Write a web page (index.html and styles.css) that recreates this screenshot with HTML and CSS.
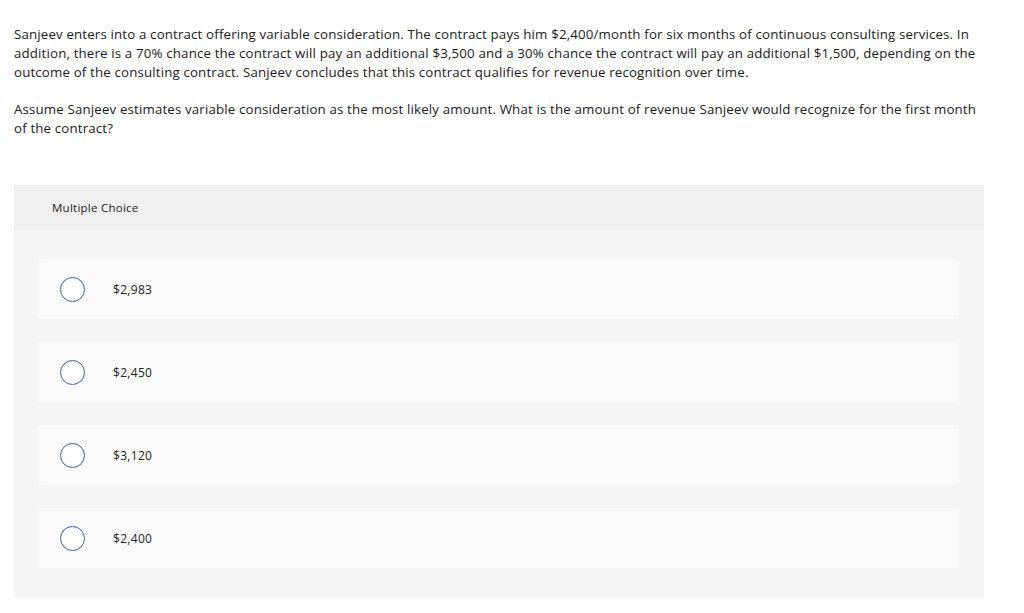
FILE: index.html
```html
<!DOCTYPE html>
<html>
<head>
<meta charset="utf-8">
<link rel="stylesheet" href="styles.css">
</head>
<body>
<div class="page">
  <div class="question">
    <p>Sanjeev enters into a contract offering variable consideration. The contract pays him $2,400/month for six months of continuous consulting services. In addition, there is a 70% chance the contract will pay an additional $3,500 and a 30% chance the contract will pay an additional $1,500, depending on the outcome of the consulting contract. Sanjeev concludes that this contract qualifies for revenue recognition over time.</p>
    <p>Assume Sanjeev estimates variable consideration as the most likely amount. What is the amount of revenue Sanjeev would recognize for the first month of the contract?</p>
  </div>
  <div class="mc">
    <div class="mc-header">Multiple Choice</div>
    <div class="mc-body">
      <div class="option"><span class="radio"></span><span class="label">$2,983</span></div>
      <div class="option"><span class="radio"></span><span class="label">$2,450</span></div>
      <div class="option"><span class="radio"></span><span class="label">$3,120</span></div>
      <div class="option"><span class="radio"></span><span class="label">$2,400</span></div>
    </div>
  </div>
</div>
</body>
</html>
```
FILE: styles.css
```css
html, body {
  margin: 0;
  padding: 0;
  background: #ffffff;
}
body {
  font-family: "Open Sans", "Liberation Sans", sans-serif;
  color: #1a1a1a;
}
.page {
  padding: 25px 40px 0 14px;
}
.question p {
  margin: 0 0 18px 0;
  font-size: 13.3px;
  letter-spacing: 0.15px;
  line-height: 19px;
}
.question p + p {
  margin-bottom: 0;
}
.mc {
  margin-top: 47px;
  background: #f5f5f5;
}
.mc-header {
  background: #efefef;
  height: 45px;
  display: flex;
  align-items: center;
  padding-left: 38px;
  font-size: 11.5px;
  letter-spacing: 0.25px;
  color: #222;
}
.mc-body {
  padding: 29px 25px 30px 24px;
  display: flex;
  flex-direction: column;
  gap: 23px;
}
.option {
  background: #fafafa;
  border-radius: 3px;
  height: 60px;
  display: flex;
  align-items: center;
  padding-left: 22px;
}
.radio {
  width: 25px;
  height: 25px;
  border: 1px solid #3a6298;
  border-radius: 50%;
  background: #fff;
  box-sizing: border-box;
  flex: none;
}
.label {
  margin-left: 28px;
  font-size: 12px;
  letter-spacing: 0.3px;
  color: #222;
}
```
